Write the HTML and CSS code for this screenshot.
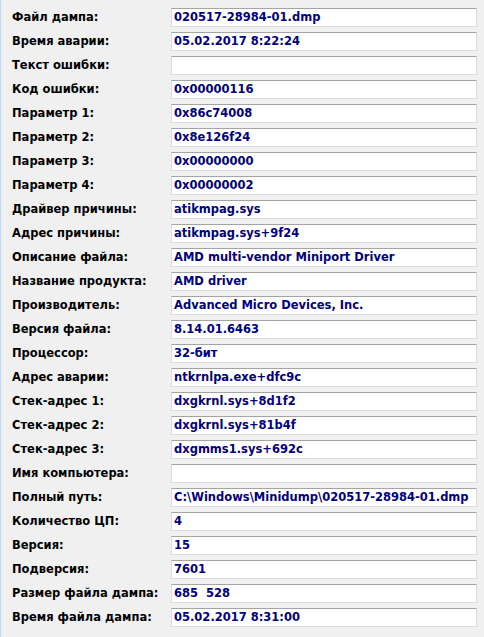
FILE: index.html
```html
<!DOCTYPE html>
<html lang="ru">
<head>
<meta charset="utf-8">
<title>Dump</title>
<link rel="stylesheet" href="styles.css">
</head>
<body>
<div class="panel">
  <div class="row"><span class="label">Файл дампа:</span><span class="field">020517-28984-01.dmp</span></div>
  <div class="row"><span class="label">Время аварии:</span><span class="field">05.02.2017 8:22:24</span></div>
  <div class="row"><span class="label">Текст ошибки:</span><span class="field"></span></div>
  <div class="row"><span class="label">Код ошибки:</span><span class="field">0x00000116</span></div>
  <div class="row"><span class="label">Параметр 1:</span><span class="field">0x86c74008</span></div>
  <div class="row"><span class="label">Параметр 2:</span><span class="field">0x8e126f24</span></div>
  <div class="row"><span class="label">Параметр 3:</span><span class="field">0x00000000</span></div>
  <div class="row"><span class="label">Параметр 4:</span><span class="field">0x00000002</span></div>
  <div class="row"><span class="label">Драйвер причины:</span><span class="field">atikmpag.sys</span></div>
  <div class="row"><span class="label">Адрес причины:</span><span class="field">atikmpag.sys+9f24</span></div>
  <div class="row"><span class="label">Описание файла:</span><span class="field">AMD multi-vendor Miniport Driver</span></div>
  <div class="row"><span class="label">Название продукта:</span><span class="field">AMD driver</span></div>
  <div class="row"><span class="label">Производитель:</span><span class="field">Advanced Micro Devices, Inc.</span></div>
  <div class="row"><span class="label">Версия файла:</span><span class="field">8.14.01.6463</span></div>
  <div class="row"><span class="label">Процессор:</span><span class="field">32-бит</span></div>
  <div class="row"><span class="label">Адрес аварии:</span><span class="field">ntkrnlpa.exe+dfc9c</span></div>
  <div class="row"><span class="label">Стек-адрес 1:</span><span class="field">dxgkrnl.sys+8d1f2</span></div>
  <div class="row"><span class="label">Стек-адрес 2:</span><span class="field">dxgkrnl.sys+81b4f</span></div>
  <div class="row"><span class="label">Стек-адрес 3:</span><span class="field">dxgmms1.sys+692c</span></div>
  <div class="row"><span class="label">Имя компьютера:</span><span class="field"></span></div>
  <div class="row"><span class="label">Полный путь:</span><span class="field">C:\Windows\Minidump\020517-28984-01.dmp</span></div>
  <div class="row"><span class="label">Количество ЦП:</span><span class="field">4</span></div>
  <div class="row"><span class="label">Версия:</span><span class="field">15</span></div>
  <div class="row"><span class="label">Подверсия:</span><span class="field">7601</span></div>
  <div class="row"><span class="label">Размер файла дампа:</span><span class="field">685&nbsp;&nbsp;528</span></div>
  <div class="row"><span class="label">Время файла дампа:</span><span class="field">05.02.2017 8:31:00</span></div>
</div>
</body>
</html>
```
FILE: styles.css
```css
html, body {
  margin: 0;
  padding: 0;
  background: #f0f0f0;
}
body {
  width: 484px;
  height: 637px;
  overflow: hidden;
  font-family: "DejaVu Sans", "Liberation Sans", sans-serif;
  font-size: 11.5px;
  font-weight: bold;
}
.panel {
  box-sizing: border-box;
  height: 637px;
  border-left: 1px solid #c6d8ec;
  box-shadow: inset 1px 0 0 #e6eef7;
  padding-top: 8px;
  display: flex;
  flex-direction: column;
  gap: 5px;
}
.row {
  display: flex;
  align-items: center;
  height: 19px;
}
.label {
  width: 159px;
  padding-left: 11px;
  color: #000000;
  white-space: nowrap;
  line-height: 19px;
}
.field {
  box-sizing: border-box;
  width: 306px;
  height: 19px;
  background: #ffffff;
  border: 1px solid #dcdcdc;
  border-top-color: #a4a4a4;
  padding-left: 2px;
  color: #000080;
  line-height: 17px;
  white-space: nowrap;
  overflow: hidden;
}
```
